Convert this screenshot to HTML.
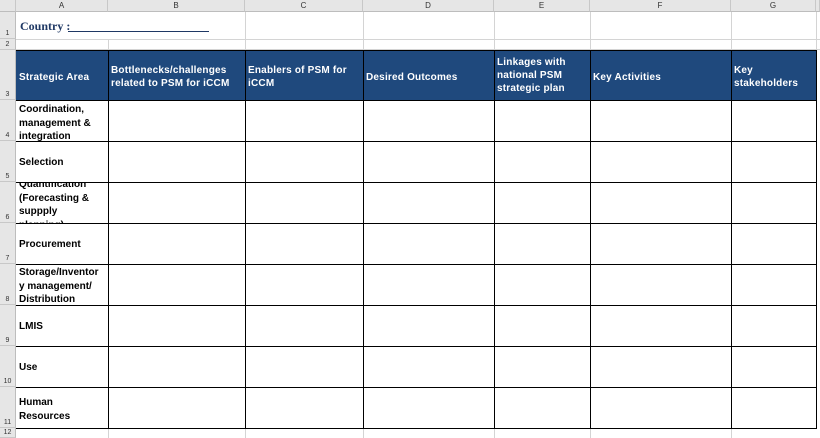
<!DOCTYPE html>
<html><head><meta charset="utf-8"><style>
body{margin:0;width:820px;height:434px;background:#fff;position:relative;overflow:hidden;font-family:"Liberation Sans",Arial,sans-serif;}
.a{position:absolute;box-sizing:border-box;}
.ch{top:0;height:12px;background:#e6e6e6;border-right:1px solid #c8c8c8;border-bottom:1px solid #bdbdbd;font-size:8px;color:#333;text-align:center;line-height:12px;}
.rh{left:0;width:16px;background:#e6e6e6;border-right:1px solid #bdbdbd;border-bottom:1px solid #c8c8c8;font-size:7px;color:#333;text-align:center;}
.rh span{position:absolute;bottom:0;left:0;width:15px;text-align:center;line-height:9px;}
.vl{width:1px;background:#d4d4d4;}
.hl{height:1px;background:#d4d4d4;}
.hd{background:#1f497d;color:#fff;font-weight:bold;font-size:10px;line-height:13px;display:flex;align-items:center;padding-left:3px;padding-top:4px;letter-spacing:0.2px;}
.cell{font-weight:bold;font-size:10px;line-height:13.5px;color:#000;overflow:hidden;padding-left:3px;}
.bk{background:#000;}
</style></head><body>
<div class="a ch" style="left:0;width:16px;"></div>
<div class="a ch" style="left:16px;width:92px;">A</div>
<div class="a ch" style="left:108px;width:137px;">B</div>
<div class="a ch" style="left:245px;width:118px;">C</div>
<div class="a ch" style="left:363px;width:131px;">D</div>
<div class="a ch" style="left:494px;width:96px;">E</div>
<div class="a ch" style="left:590px;width:141px;">F</div>
<div class="a ch" style="left:731px;width:85px;">G</div>
<div class="a ch" style="left:816px;width:4px;"></div>
<div class="a rh" style="top:12px;height:27px;"><span>1</span></div>
<div class="a rh" style="top:39px;height:11px;"><span>2</span></div>
<div class="a rh" style="top:50px;height:50px;"><span>3</span></div>
<div class="a rh" style="top:100px;height:41px;"><span>4</span></div>
<div class="a rh" style="top:141px;height:41px;"><span>5</span></div>
<div class="a rh" style="top:182px;height:41px;"><span>6</span></div>
<div class="a rh" style="top:223px;height:41px;"><span>7</span></div>
<div class="a rh" style="top:264px;height:41px;"><span>8</span></div>
<div class="a rh" style="top:305px;height:41px;"><span>9</span></div>
<div class="a rh" style="top:346px;height:41px;"><span>10</span></div>
<div class="a rh" style="top:387px;height:41px;"><span>11</span></div>
<div class="a rh" style="top:428px;height:10px;"><span>12</span></div>
<div class="a hl" style="left:16px;top:39px;width:804px;"></div>
<div class="a hl" style="left:16px;top:49px;width:804px;"></div>
<div class="a vl" style="left:245px;top:12px;height:38px;"></div>
<div class="a vl" style="left:363px;top:12px;height:38px;"></div>
<div class="a vl" style="left:494px;top:12px;height:38px;"></div>
<div class="a vl" style="left:590px;top:12px;height:38px;"></div>
<div class="a vl" style="left:731px;top:12px;height:38px;"></div>
<div class="a vl" style="left:816px;top:12px;height:38px;"></div>
<div class="a vl" style="left:108px;top:39px;height:11px;"></div>
<div class="a vl" style="left:108px;top:428px;height:10px;"></div>
<div class="a vl" style="left:245px;top:428px;height:10px;"></div>
<div class="a vl" style="left:363px;top:428px;height:10px;"></div>
<div class="a vl" style="left:494px;top:428px;height:10px;"></div>
<div class="a vl" style="left:590px;top:428px;height:10px;"></div>
<div class="a vl" style="left:731px;top:428px;height:10px;"></div>
<div class="a" style="left:20px;top:19px;font-family:'Liberation Serif',serif;font-weight:bold;font-size:12px;color:#1f3864;">Country :</div>
<div class="a" style="left:68px;top:31px;width:141px;height:1px;background:#1f3864;"></div>
<div class="a hd" style="left:16px;top:50px;width:92px;height:50px;">Strategic Area</div>
<div class="a hd" style="left:108px;top:50px;width:137px;height:50px;">Bottlenecks/challenges<br>related to PSM for iCCM</div>
<div class="a hd" style="left:245px;top:50px;width:118px;height:50px;">Enablers of PSM for<br>iCCM</div>
<div class="a hd" style="left:363px;top:50px;width:131px;height:50px;">Desired Outcomes</div>
<div class="a hd" style="left:494px;top:50px;width:96px;height:50px;padding-top:0;">Linkages with<br>national PSM<br>strategic plan</div>
<div class="a hd" style="left:590px;top:50px;width:141px;height:50px;">Key Activities</div>
<div class="a hd" style="left:731px;top:50px;width:85px;height:50px;">Key<br>stakeholders</div>
<div class="a cell" style="left:16px;top:101px;width:92px;height:40px;padding-top:2px;">Coordination,<br>management &amp;<br>integration</div>
<div class="a cell" style="left:16px;top:141px;width:92px;height:41px;padding-top:15px;">Selection</div>
<div class="a cell" style="left:16px;top:183px;width:92px;height:40px;"><div style="margin-top:-5px;">Quantification<br>(Forecasting &amp;<br>suppply<br>planning)</div></div>
<div class="a cell" style="left:16px;top:223px;width:92px;height:41px;padding-top:15px;">Procurement</div>
<div class="a cell" style="left:16px;top:265px;width:92px;height:40px;padding-top:1px;">Storage/Inventor<br>y management/<br>Distribution</div>
<div class="a cell" style="left:16px;top:305px;width:92px;height:41px;padding-top:15px;">LMIS</div>
<div class="a cell" style="left:16px;top:346px;width:92px;height:41px;padding-top:15px;">Use</div>
<div class="a cell" style="left:16px;top:388px;width:92px;height:40px;padding-top:8px;">Human<br>Resources</div>
<div class="a bk" style="left:16px;top:50px;width:801px;height:1px;"></div>
<div class="a bk" style="left:16px;top:100px;width:801px;height:1px;"></div>
<div class="a bk" style="left:16px;top:141px;width:801px;height:1px;"></div>
<div class="a bk" style="left:16px;top:182px;width:801px;height:1px;"></div>
<div class="a bk" style="left:16px;top:223px;width:801px;height:1px;"></div>
<div class="a bk" style="left:16px;top:264px;width:801px;height:1px;"></div>
<div class="a bk" style="left:16px;top:305px;width:801px;height:1px;"></div>
<div class="a bk" style="left:16px;top:346px;width:801px;height:1px;"></div>
<div class="a bk" style="left:16px;top:387px;width:801px;height:1px;"></div>
<div class="a bk" style="left:16px;top:428px;width:801px;height:1px;"></div>
<div class="a bk" style="left:108px;top:50px;width:1px;height:379px;"></div>
<div class="a bk" style="left:245px;top:50px;width:1px;height:379px;"></div>
<div class="a bk" style="left:363px;top:50px;width:1px;height:379px;"></div>
<div class="a bk" style="left:494px;top:50px;width:1px;height:379px;"></div>
<div class="a bk" style="left:590px;top:50px;width:1px;height:379px;"></div>
<div class="a bk" style="left:731px;top:50px;width:1px;height:379px;"></div>
<div class="a bk" style="left:816px;top:50px;width:1px;height:379px;"></div>
</body></html>
